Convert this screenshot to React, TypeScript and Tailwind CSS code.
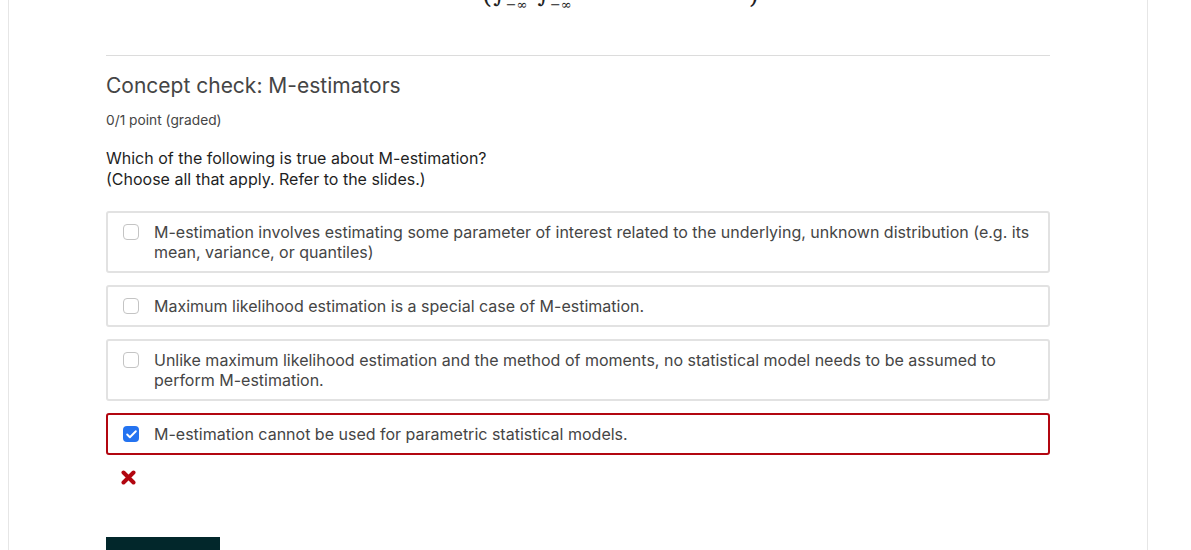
import { Check } from "lucide-react";

const options = [
  {
    text: "M-estimation involves estimating some parameter of interest related to the underlying, unknown distribution (e.g. its mean, variance, or quantiles)",
    checked: false,
  },
  { text: "Maximum likelihood estimation is a special case of M-estimation.", checked: false },
  {
    text: "Unlike maximum likelihood estimation and the method of moments, no statistical model needs to be assumed to perform M-estimation.",
    checked: false,
  },
  { text: "M-estimation cannot be used for parametric statistical models.", checked: true },
];

const Option = ({ text, checked }: { text: string; checked: boolean }) => (
  <label
    className={
      checked
        ? "flex items-start gap-[15px] rounded-[3px] border-2 border-[#b20610] px-[15px] py-[9px]"
        : "flex items-start gap-[15px] rounded-[3px] border-2 border-[#e2e2e2] px-[15px] py-[9px]"
    }
  >
    {checked ? (
      <span className="mt-[2px] flex h-[16px] w-[16px] shrink-0 items-center justify-center rounded-[4px] bg-[#2473f0]">
        <Check className="h-[13px] w-[13px] text-white" strokeWidth={3.5} />
      </span>
    ) : (
      <span className="mt-[2px] h-[16px] w-[16px] shrink-0 rounded-[4px] border border-[#c4c4c4] bg-white" />
    )}
    <span className="text-[16px] leading-[20px] text-[#454545]">{text}</span>
  </label>
);

export default function App() {
  return (
    <div className="h-[550px] overflow-hidden bg-white font-['Inter',sans-serif]">
      <div className="ml-[8px] h-full w-[1140px] border-x border-[#e6e6e6] pl-[97px]">
        <div className="w-[944px]">
          {/* tail end of the equation above, cut off by the scroll */}
          <div className="h-[10px] overflow-hidden">
            <div className="-mt-[20px] ml-[376px] flex items-start font-['DejaVu_Serif',serif] text-[#222]">
              <span className="text-[26px] font-light leading-[28px]">(</span>
              <span className="ml-[1px] text-[24px] leading-[28px]">∫</span>
              <span className="mt-[18px] text-[13px] leading-[13px]">−∞</span>
              <span className="ml-[10px] text-[24px] leading-[28px]">∫</span>
              <span className="mt-[18px] text-[13px] leading-[13px]">−∞</span>
              <span className="ml-[177px] text-[26px] font-light leading-[28px]">)</span>
            </div>
          </div>

          <div className="mt-[45px] border-t border-[#dcdcdc]" />

          <h3 className="mt-[17px] text-[21px] leading-[26px] text-[#454545]">Concept check: M-estimators</h3>
          <div className="mt-[13px] text-[13.75px] leading-[16px] text-[#454545]">0/1 point (graded)</div>

          <div className="mt-[20px] text-[16px] leading-[21px] text-[#1f1f1f]">
            <p>Which of the following is true about M-estimation?</p>
            <p>(Choose all that apply. Refer to the slides.)</p>
          </div>

          <div className="mt-[21px] flex flex-col gap-[12px]">
            {options.map((o, i) => (
              <Option key={i} text={o.text} checked={o.checked} />
            ))}
          </div>

          <div className="mt-[15px] pl-[15px]">
            <svg width="15" height="15" viewBox="0 0 15 15">
              <path d="M2.5 2.5 L12.5 12.5 M12.5 2.5 L2.5 12.5" stroke="#b20610" strokeWidth="4" strokeLinecap="round" />
            </svg>
          </div>

          <div className="mt-[52px] h-[40px] w-[114px] bg-[#02272b]" />
        </div>
      </div>
    </div>
  );
}
